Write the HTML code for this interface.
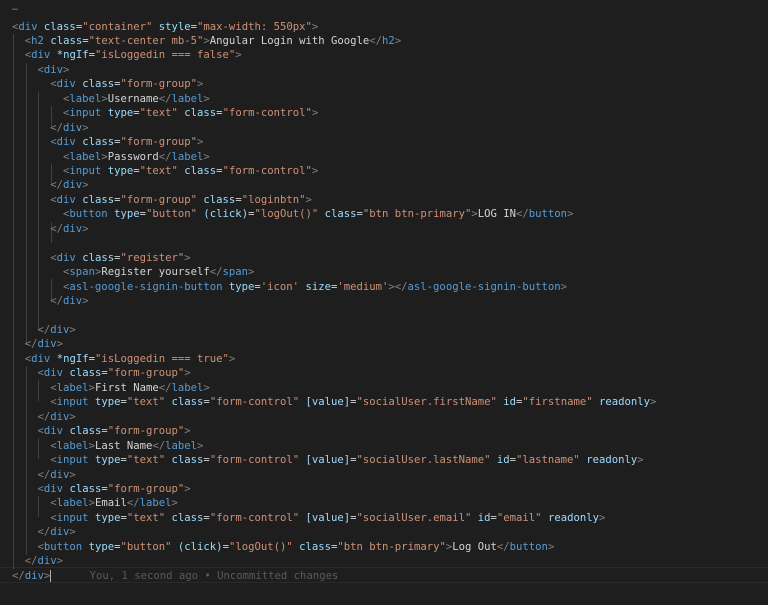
<!DOCTYPE html>
<html><head><meta charset="utf-8"><style>
html,body{margin:0;padding:0;background:#1e1e1e;width:768px;height:605px;overflow:hidden}
.c{position:absolute;left:12px;top:19.5px;font-family:"DejaVu Sans Mono","Liberation Mono",monospace;font-size:10.6px;line-height:14.45px;color:#d4d4d4;white-space:pre}
.b{color:#808080}.t{color:#569cd6}.a{color:#9cdcfe}.s{color:#ce9178}
.g{position:absolute;width:1px;background:#404040}
.cur{position:absolute;left:0;top:567px;width:768px;height:14px;border-top:1px solid #2a2a2a;border-bottom:1px solid #2a2a2a}
.dots{position:absolute;left:12px;top:2px;color:#777;font:10px "DejaVu Sans Mono",monospace}
</style></head><body>
<div class="dots">…</div>
<div class="cur"></div>
<div class="g" style="left:13px;top:34px;height:535px"></div>
<div class="g" style="left:26px;top:63px;height:282px"></div>
<div class="g" style="left:26px;top:366px;height:189px"></div>
<div class="g" style="left:38px;top:92px;height:237px"></div>
<div class="g" style="left:51px;top:106px;height:21px"></div>
<div class="g" style="left:51px;top:164px;height:21px"></div>
<div class="g" style="left:51px;top:222px;height:21px"></div>
<div class="g" style="left:51px;top:279px;height:21px"></div>
<div class="g" style="left:38px;top:380px;height:21px"></div>
<div class="g" style="left:38px;top:438px;height:21px"></div>
<div class="g" style="left:38px;top:496px;height:21px"></div>
<div class="c"><span class="b">&lt;</span><span class="t">div</span> <span class="a">class</span>=<span class="s">"container"</span> <span class="a">style</span>=<span class="s">"max-width: 550px"</span><span class="b">&gt;</span>
  <span class="b">&lt;</span><span class="t">h2</span> <span class="a">class</span>=<span class="s">"text-center mb-5"</span><span class="b">&gt;</span>Angular Login with Google<span class="b">&lt;/</span><span class="t">h2</span><span class="b">&gt;</span>
  <span class="b">&lt;</span><span class="t">div</span> <span class="a">*ngIf</span>=<span class="s">"isLoggedin === false"</span><span class="b">&gt;</span>
    <span class="b">&lt;</span><span class="t">div</span><span class="b">&gt;</span>
      <span class="b">&lt;</span><span class="t">div</span> <span class="a">class</span>=<span class="s">"form-group"</span><span class="b">&gt;</span>
        <span class="b">&lt;</span><span class="t">label</span><span class="b">&gt;</span>Username<span class="b">&lt;/</span><span class="t">label</span><span class="b">&gt;</span>
        <span class="b">&lt;</span><span class="t">input</span> <span class="a">type</span>=<span class="s">"text"</span> <span class="a">class</span>=<span class="s">"form-control"</span><span class="b">&gt;</span>
      <span class="b">&lt;/</span><span class="t">div</span><span class="b">&gt;</span>
      <span class="b">&lt;</span><span class="t">div</span> <span class="a">class</span>=<span class="s">"form-group"</span><span class="b">&gt;</span>
        <span class="b">&lt;</span><span class="t">label</span><span class="b">&gt;</span>Password<span class="b">&lt;/</span><span class="t">label</span><span class="b">&gt;</span>
        <span class="b">&lt;</span><span class="t">input</span> <span class="a">type</span>=<span class="s">"text"</span> <span class="a">class</span>=<span class="s">"form-control"</span><span class="b">&gt;</span>
      <span class="b">&lt;/</span><span class="t">div</span><span class="b">&gt;</span>
      <span class="b">&lt;</span><span class="t">div</span> <span class="a">class</span>=<span class="s">"form-group"</span> <span class="a">class</span>=<span class="s">"loginbtn"</span><span class="b">&gt;</span>
        <span class="b">&lt;</span><span class="t">button</span> <span class="a">type</span>=<span class="s">"button"</span> <span class="a">(click)</span>=<span class="s">"logOut()"</span> <span class="a">class</span>=<span class="s">"btn btn-primary"</span><span class="b">&gt;</span>LOG IN<span class="b">&lt;/</span><span class="t">button</span><span class="b">&gt;</span>
      <span class="b">&lt;/</span><span class="t">div</span><span class="b">&gt;</span>

      <span class="b">&lt;</span><span class="t">div</span> <span class="a">class</span>=<span class="s">"register"</span><span class="b">&gt;</span>
        <span class="b">&lt;</span><span class="t">span</span><span class="b">&gt;</span>Register yourself<span class="b">&lt;/</span><span class="t">span</span><span class="b">&gt;</span>
        <span class="b">&lt;</span><span class="t">asl-google-signin-button</span> <span class="a">type</span>=<span class="s">'icon'</span> <span class="a">size</span>=<span class="s">'medium'</span><span class="b">&gt;&lt;/</span><span class="t">asl-google-signin-button</span><span class="b">&gt;</span>
      <span class="b">&lt;/</span><span class="t">div</span><span class="b">&gt;</span>

    <span class="b">&lt;/</span><span class="t">div</span><span class="b">&gt;</span>
  <span class="b">&lt;/</span><span class="t">div</span><span class="b">&gt;</span>
  <span class="b">&lt;</span><span class="t">div</span> <span class="a">*ngIf</span>=<span class="s">"isLoggedin === true"</span><span class="b">&gt;</span>
    <span class="b">&lt;</span><span class="t">div</span> <span class="a">class</span>=<span class="s">"form-group"</span><span class="b">&gt;</span>
      <span class="b">&lt;</span><span class="t">label</span><span class="b">&gt;</span>First Name<span class="b">&lt;/</span><span class="t">label</span><span class="b">&gt;</span>
      <span class="b">&lt;</span><span class="t">input</span> <span class="a">type</span>=<span class="s">"text"</span> <span class="a">class</span>=<span class="s">"form-control"</span> <span class="a">[value]</span>=<span class="s">"socialUser.firstName"</span> <span class="a">id</span>=<span class="s">"firstname"</span> <span class="a">readonly</span><span class="b">&gt;</span>
    <span class="b">&lt;/</span><span class="t">div</span><span class="b">&gt;</span>
    <span class="b">&lt;</span><span class="t">div</span> <span class="a">class</span>=<span class="s">"form-group"</span><span class="b">&gt;</span>
      <span class="b">&lt;</span><span class="t">label</span><span class="b">&gt;</span>Last Name<span class="b">&lt;/</span><span class="t">label</span><span class="b">&gt;</span>
      <span class="b">&lt;</span><span class="t">input</span> <span class="a">type</span>=<span class="s">"text"</span> <span class="a">class</span>=<span class="s">"form-control"</span> <span class="a">[value]</span>=<span class="s">"socialUser.lastName"</span> <span class="a">id</span>=<span class="s">"lastname"</span> <span class="a">readonly</span><span class="b">&gt;</span>
    <span class="b">&lt;/</span><span class="t">div</span><span class="b">&gt;</span>
    <span class="b">&lt;</span><span class="t">div</span> <span class="a">class</span>=<span class="s">"form-group"</span><span class="b">&gt;</span>
      <span class="b">&lt;</span><span class="t">label</span><span class="b">&gt;</span>Email<span class="b">&lt;/</span><span class="t">label</span><span class="b">&gt;</span>
      <span class="b">&lt;</span><span class="t">input</span> <span class="a">type</span>=<span class="s">"text"</span> <span class="a">class</span>=<span class="s">"form-control"</span> <span class="a">[value]</span>=<span class="s">"socialUser.email"</span> <span class="a">id</span>=<span class="s">"email"</span> <span class="a">readonly</span><span class="b">&gt;</span>
    <span class="b">&lt;/</span><span class="t">div</span><span class="b">&gt;</span>
    <span class="b">&lt;</span><span class="t">button</span> <span class="a">type</span>=<span class="s">"button"</span> <span class="a">(click)</span>=<span class="s">"logOut()"</span> <span class="a">class</span>=<span class="s">"btn btn-primary"</span><span class="b">&gt;</span>Log Out<span class="b">&lt;/</span><span class="t">button</span><span class="b">&gt;</span>
  <span class="b">&lt;/</span><span class="t">div</span><span class="b">&gt;</span>
<span class="b">&lt;/</span><span class="t">div</span><span class="b">&gt;</span><span style="border-left:1px solid #aeafad"></span>      <span style="color:#5a5a5a">You, 1 second ago • Uncommitted changes</span></div>
</body></html>
